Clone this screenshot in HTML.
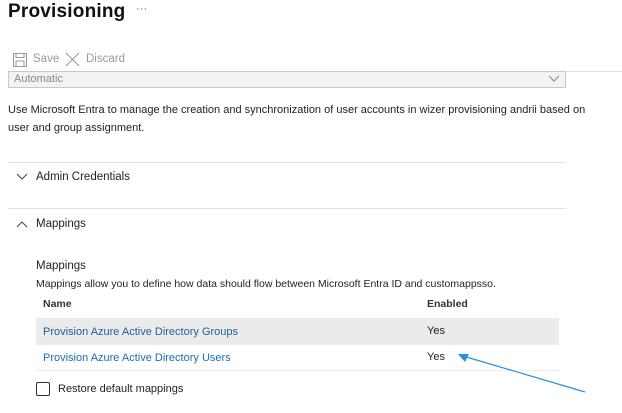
<!DOCTYPE html>
<html><head><style>
body{margin:0;width:622px;height:413px;background:#fff;font-family:"Liberation Sans",sans-serif;color:#222;position:relative;overflow:hidden;font-size:11px}
.a{position:absolute;white-space:nowrap}
.l{position:absolute;height:1px;background:#e1e1e1}
.lnk{color:#1a6fb5}
</style></head><body>
<div class="a" style="left:8px;top:1px;font-size:19px;font-weight:bold;color:#111;letter-spacing:0.2px">Provisioning</div>
<div class="a" style="left:136px;top:3px;font-size:11px;color:#666">···</div>
<svg class="a" style="left:12px;top:52px" width="16" height="16" viewBox="0 0 16 16" fill="none" stroke="#999" stroke-width="1"><rect x="1.5" y="1.5" width="13" height="13"/><rect x="4" y="1.5" width="8" height="4"/><rect x="4" y="9" width="8" height="5.5"/></svg>
<div class="a" style="left:33px;top:53px;color:#999;font-size:11.5px">Save</div>
<svg class="a" style="left:65px;top:52px" width="15" height="15" viewBox="0 0 15 15" stroke="#999" stroke-width="1.1"><path d="M1 1L14 14M14 1L1 14"/></svg>
<div class="a" style="left:86px;top:53px;color:#999;font-size:11.5px">Discard</div>
<div class="l" style="left:566px;top:71px;width:56px"></div>
<div class="a" style="left:8px;top:71px;width:556px;height:15px;border:1px solid #c8c8c8;background:#f3f3f3"></div>
<div class="a" style="left:14px;top:73px;color:#888">Automatic</div>
<svg class="a" style="left:548px;top:75px" width="12" height="8" viewBox="0 0 12 8" fill="none" stroke="#888"><path d="M1 1L6 6L11 1"/></svg>
<div class="a" style="left:8px;top:101px;line-height:18px;font-size:11px;color:#222">Use Microsoft Entra to manage the creation and synchronization of user accounts in wizer provisioning andrii based on<br>user and group assignment.</div>
<div class="l" style="left:8px;top:162px;width:558px"></div>
<svg class="a" style="left:16px;top:173px" width="12" height="8" viewBox="0 0 12 8" fill="none" stroke="#444"><path d="M1 1L6 6L11 1"/></svg>
<div class="a" style="left:36px;top:171px;font-size:11.5px">Admin Credentials</div>
<div class="l" style="left:8px;top:208px;width:558px"></div>
<svg class="a" style="left:16px;top:220px" width="12" height="8" viewBox="0 0 12 8" fill="none" stroke="#444"><path d="M1 7L6 2L11 7"/></svg>
<div class="a" style="left:36px;top:218px;font-size:11.5px">Mappings</div>
<div class="a" style="left:36px;top:260px;font-size:11.5px">Mappings</div>
<div class="a" style="left:36px;top:278px;font-size:10.5px">Mappings allow you to define how data should flow between Microsoft Entra ID and customappsso.</div>
<div class="a" style="left:43px;top:298px;font-weight:bold;font-size:10.5px;color:#333">Name</div>
<div class="a" style="left:427px;top:298px;font-weight:bold;font-size:10.5px;color:#333">Enabled</div>
<div class="a" style="left:36px;top:318px;width:523px;height:27px;background:#ebebeb"></div>
<div class="a lnk" style="left:43px;top:326px;color:#1f5c99">Provision Azure Active Directory Groups</div>
<div class="a" style="left:427px;top:325px">Yes</div>
<div class="a lnk" style="left:43px;top:352px">Provision Azure Active Directory Users</div>
<div class="a" style="left:427px;top:351px">Yes</div>
<div class="l" style="left:36px;top:370px;width:523px;background:#eee"></div>
<div class="a" style="left:36px;top:382px;width:12px;height:12px;border:1px solid #333;border-radius:2px"></div>
<div class="a" style="left:58px;top:383px">Restore default mappings</div>
<svg class="a" style="left:0;top:0" width="622" height="413"><line x1="585" y1="392" x2="463" y2="356" stroke="#2a8ee0" stroke-width="1.2"/><path d="M458 354L469 354L465 362Z" fill="#2a8ee0"/></svg>
</body></html>
